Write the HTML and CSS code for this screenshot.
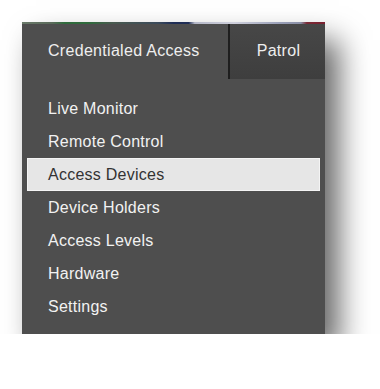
FILE: index.html
```html
<!DOCTYPE html>
<html>
<head>
<meta charset="utf-8">
<link rel="stylesheet" href="styles.css">
</head>
<body>
<div class="panel">
  <div class="strip"></div>
  <div class="tabs">
    <div class="tab active">Credentialed Access</div>
    <div class="tab other">Patrol</div>
  </div>
  <ul class="menu">
    <li class="item">Live Monitor</li>
    <li class="item">Remote Control</li>
    <li class="item selected">Access Devices</li>
    <li class="item">Device Holders</li>
    <li class="item">Access Levels</li>
    <li class="item">Hardware</li>
    <li class="item">Settings</li>
  </ul>
</div>
</body>
</html>
```
FILE: styles.css
```css
html, body {
  margin: 0;
  padding: 0;
  background: #ffffff;
}
body {
  padding: 22px 0 0 22px;
  font-family: "Liberation Sans", Arial, sans-serif;
}
.panel {
  width: 303px;
  height: 312px;
  background: #4e4e4e;
  box-shadow: 14px 18px 28px rgba(0, 0, 0, 0.6);
  display: flex;
  flex-direction: column;
}
.strip {
  height: 2px;
  background: linear-gradient(to right, #6a7a6a 0%, #5a6a5a 10%, #2f6b3c 14%, #2f6b3c 22%, #4a5a50 30%, #3b4a5a 45%, #1f2d55 50%, #1f2d55 55%, #b5b8c8 57%, #cfd0dc 70%, #9aa0b8 85%, #8a8fa6 92%, #7a2a35 94%, #7a2030 100%);
}
.tabs {
  display: flex;
  height: 55px;
}
.tab {
  display: flex;
  align-items: center;
  font-size: 16px;
  letter-spacing: 0.3px;
  color: #eeeeee;
  padding-bottom: 1px;
  box-sizing: border-box;
}
.tab.active {
  width: 206px;
  padding-left: 26px;
  background: #4e4e4e;
}
.tab.other {
  flex: 1;
  justify-content: center;
  padding-left: 2px;
  border-left: 2px solid #1e1e1e;
  background: linear-gradient(to bottom, #474747, #3e3e3e);
}
.menu {
  list-style: none;
  margin: 0;
  padding: 13px 5px 0 5px;
}
.item {
  height: 33px;
  display: flex;
  align-items: center;
  padding-left: 21px;
  font-size: 16px;
  letter-spacing: 0.25px;
  color: #f2f2f2;
  box-sizing: border-box;
}
.item.selected {
  background: #e6e6e6;
  border: 1px solid #f4f4f4;
  padding-left: 20px;
  color: #333333;
}
```
